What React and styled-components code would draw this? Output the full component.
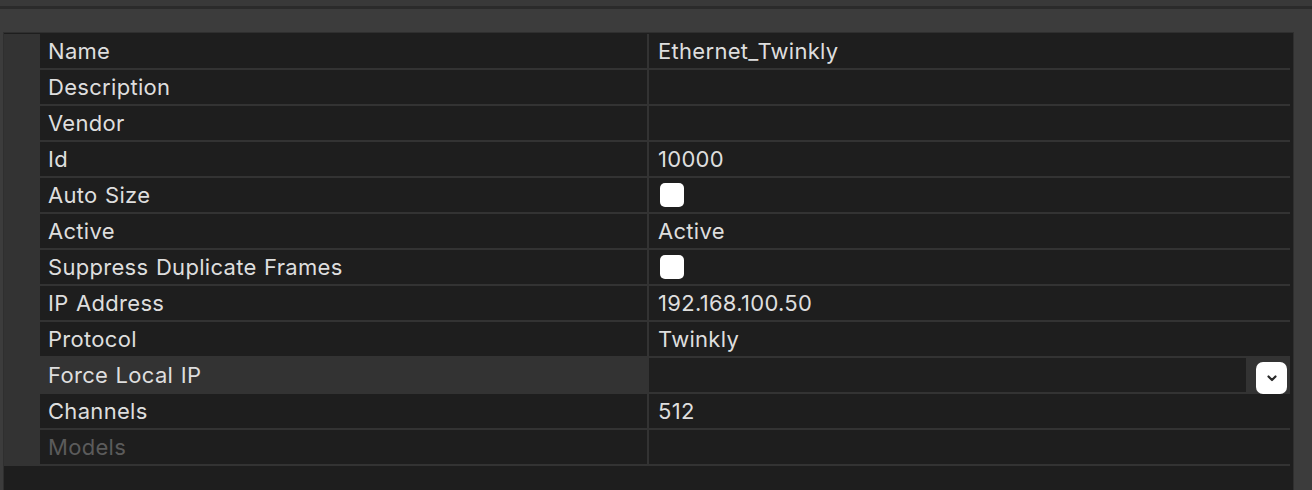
import React from "react";
import styled, { createGlobalStyle } from "styled-components";

const GlobalStyle = createGlobalStyle`
  html, body {
    margin: 0;
    padding: 0;
    background: #3b3b3b;
    overflow: hidden;
  }
  body {
    font-family: Inter, "Open Sans", "Liberation Sans", sans-serif;
  }
`;

const Page = styled.div`
  width: 1312px;
  height: 490px;
  display: flex;
  flex-direction: column;
  background: #3b3b3b;
`;

const TopStrip = styled.div`
  height: 6px;
  background: #393939;
  border-bottom: 3px solid #2b2b2b;
  flex: none;
`;

const Panel = styled.div`
  flex: 1;
  display: flex;
  padding: 23px 18px 0 3px;
  background: #3c3c3c;
  min-height: 0;
`;

const GridFrame = styled.div`
  flex: 1;
  display: flex;
  flex-direction: column;
  background: #1e1e1e;
  border: 1px solid #2f2f2f;
  border-bottom: none;
  padding: 1px 3px 0 0;
  min-height: 0;
`;

const Body = styled.div`
  display: flex;
  flex-direction: column;
`;

const Row = styled.div`
  display: grid;
  grid-template-columns: 36px 609px 1fr;
  background: #333;
  padding-bottom: 2px;
`;

const Gutter = styled.div`
  background: #333;
`;

const Cell = styled.div`
  height: 34px;
  display: flex;
  align-items: center;
  background: ${(p) => (p.$selected ? "#333" : "#1e1e1e")};
  color: ${(p) => (p.$disabled ? "#5b5b5b" : "#dedede")};
  font-size: 22px;
  letter-spacing: 0.3px;
  word-spacing: 1px;
  white-space: nowrap;
`;

const Label = styled(Cell)`
  padding-left: 8px;
  margin-right: 2px;
`;

const Value = styled(Cell)`
  padding-left: 9px;
`;

const Check = styled.span`
  width: 24px;
  height: 24px;
  border-radius: 5px;
  background: #fff;
  margin-left: 2px;
`;

const EditorCell = styled.div`
  height: 34px;
  display: flex;
  align-items: flex-start;
  gap: 10px;
  background: #333;
  padding-right: 3px;
`;

const Editor = styled.div`
  flex: 1;
  height: 34px;
  background: #1f1f1f;
`;

const DropButton = styled.button`
  width: 31px;
  height: 32px;
  margin-top: 4px;
  border: none;
  border-radius: 7px;
  background: #fff;
  display: flex;
  align-items: center;
  justify-content: center;
  padding: 0;
`;

const Chevron = () => (
  <svg width="10" height="7" viewBox="0 0 10 7">
    <path
      d="M1.5 1.5 L5 5 L8.5 1.5"
      fill="none"
      stroke="#2a2a2a"
      strokeWidth="2.2"
      strokeLinecap="round"
      strokeLinejoin="round"
    />
  </svg>
);

const rows = [
  { label: "Name", value: "Ethernet_Twinkly" },
  { label: "Description", value: "" },
  { label: "Vendor", value: "" },
  { label: "Id", value: "10000" },
  { label: "Auto Size", type: "check" },
  { label: "Active", value: "Active" },
  { label: "Suppress Duplicate Frames", type: "check" },
  { label: "IP Address", value: "192.168.100.50" },
  { label: "Protocol", value: "Twinkly" },
  { label: "Force Local IP", type: "choice" },
  { label: "Channels", value: "512" },
  { label: "Models", value: "", disabled: true },
];

const PropertyRow = ({ row }) => {
  const selected = row.type === "choice";
  let value;
  if (row.type === "check") {
    value = (
      <Value>
        <Check />
      </Value>
    );
  } else if (selected) {
    value = (
      <EditorCell>
        <Editor />
        <DropButton>
          <Chevron />
        </DropButton>
      </EditorCell>
    );
  } else {
    value = <Value>{row.value}</Value>;
  }
  return (
    <Row>
      <Gutter />
      <Label $selected={selected} $disabled={row.disabled}>
        {row.label}
      </Label>
      {value}
    </Row>
  );
};

export default function App() {
  return (
    <Page>
      <GlobalStyle />
      <TopStrip />
      <Panel>
        <GridFrame>
          <Body>
            {rows.map((r) => (
              <PropertyRow key={r.label} row={r} />
            ))}
          </Body>
        </GridFrame>
      </Panel>
    </Page>
  );
}
